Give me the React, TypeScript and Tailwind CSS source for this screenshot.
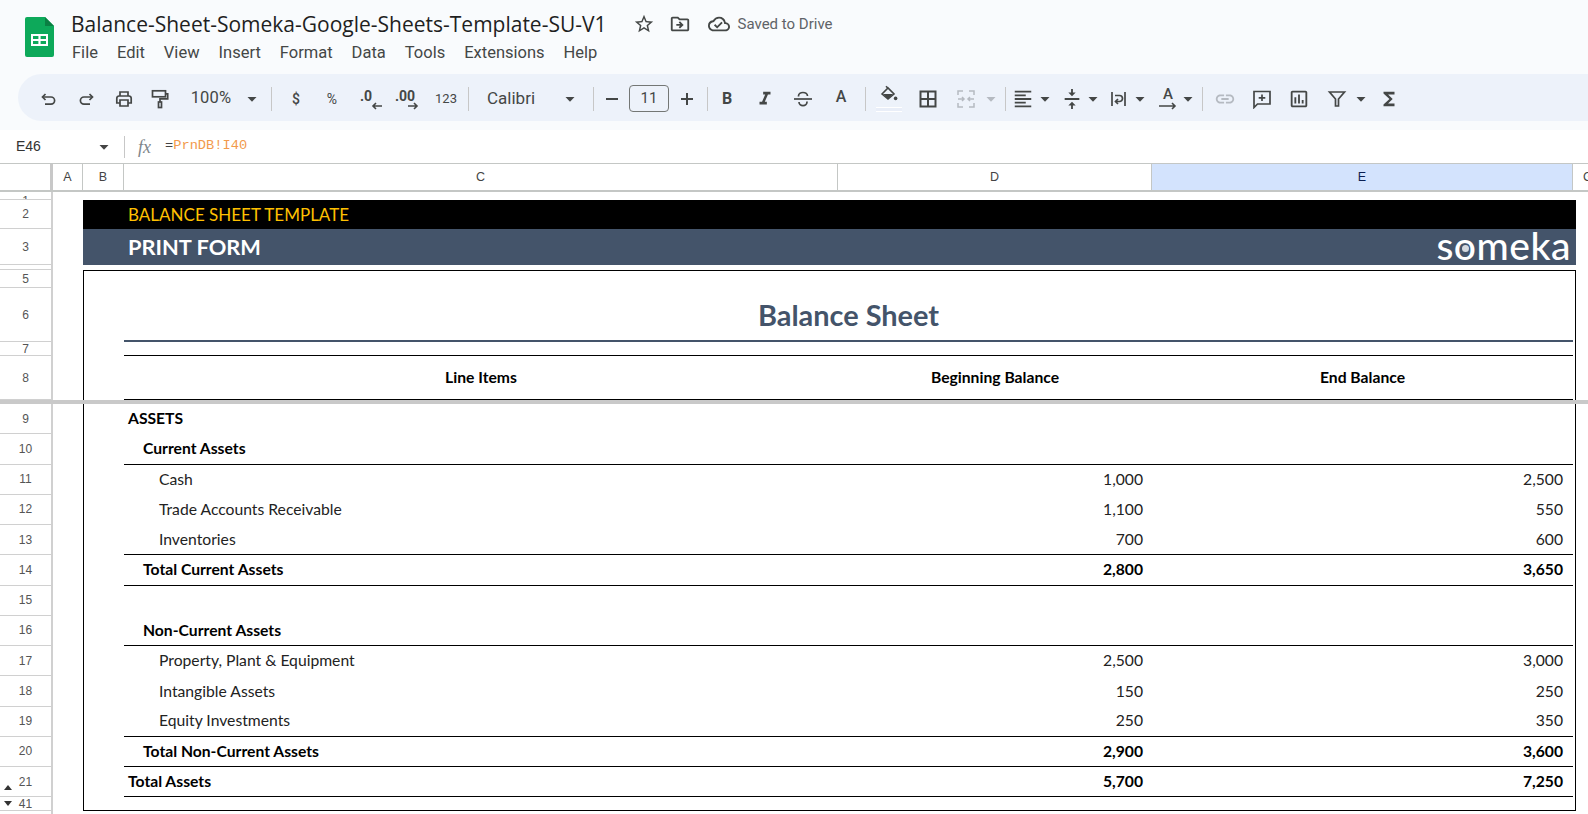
import React from "react";
import { MdFormatItalic, MdFormatAlignLeft, MdVerticalAlignCenter, MdLink, MdOutlineAssessment, MdFunctions, MdStarBorder, MdOutlineCloudDone, MdOutlineDriveFileMove } from "react-icons/md";

const C = "#444746";

function Caret({ className = "", color = C }: { className?: string; color?: string }) {
  return (
    <svg width="12" height="12" viewBox="0 0 12 12" className={`shrink-0 ${className}`}>
      <path d="M1.5 4h9L6 8.8z" fill={color} />
    </svg>
  );
}
function Sep({ className = "" }: { className?: string }) {
  return <div className={`w-px h-[24px] bg-[#c7c7c7] shrink-0 ${className}`} />;
}
function Ic({ className = "", children }: { className?: string; children: React.ReactNode }) {
  return (
    <svg width="20" height="20" viewBox="0 0 20 20" fill="none" stroke={C} strokeWidth="1.7" className={`shrink-0 ${className}`}>
      {children}
    </svg>
  );
}
function Txt({ className = "", children }: { className?: string; children: React.ReactNode }) {
  return <div className={`shrink-0 text-center text-[#444746] leading-none ${className}`}>{children}</div>;
}

function Toolbar() {
  return (
    <div className="flex items-center h-[47px] pt-[2px] ml-[18px] bg-[#edf2fa] rounded-l-[24px] font-['Roboto',sans-serif]">
      <Ic className="ml-[21px]"><path d="M6.5 5 3.5 8l3 3" /><path d="M4 8h8a3.6 3.6 0 0 1 0 7.2H6" /></Ic>
      <Ic className="ml-[17px]"><path d="M13.5 5l3 3-3 3" /><path d="M16 8H8a3.6 3.6 0 0 0 0 7.2h6" /></Ic>
      <Ic className="ml-[18px]"><path d="M6 7V3h8v4" /><path d="M6 14H2.8V9.2A2.2 2.2 0 0 1 5 7h10a2.2 2.2 0 0 1 2.2 2.2V14H14" /><path d="M6 11h8v6H6z" /></Ic>
      <Ic className="ml-[16px]"><rect x="2.5" y="1.8" width="13" height="6" /><path d="M15.5 4.8h2.2v5H10V13" /><rect x="8.5" y="13" width="3" height="5.5" /></Ic>
      <Txt className="ml-[19px] w-[44px] text-[16.5px] tracking-[0.2px]">100%</Txt>
      <Caret className="ml-[13px]" />
      <Sep className="ml-[13px]" />
      <Txt className="ml-[15px] w-[18px] text-[14px] font-medium">$</Txt>
      <Txt className="ml-[18px] w-[18px] text-[14px]">%</Txt>
      <div className="ml-[18px] w-[24px] h-[24px] relative shrink-0 text-[#444746]">
        <div className="text-[14px] font-bold leading-none pl-[1px] pt-[2px]">.0</div>
        <svg width="12" height="8" viewBox="0 0 12 8" className="absolute right-0 bottom-[1px]"><path d="M11 4H2M5 1 2 4l3 3" fill="none" stroke={C} strokeWidth="1.6" /></svg>
      </div>
      <div className="ml-[12px] w-[26px] h-[24px] relative shrink-0 text-[#444746]">
        <div className="text-[14px] font-bold leading-none pt-[2px]">.00</div>
        <svg width="12" height="8" viewBox="0 0 12 8" className="absolute right-[2px] bottom-[1px]"><path d="M1 4h9M7 1l3 3-3 3" fill="none" stroke={C} strokeWidth="1.6" /></svg>
      </div>
      <Txt className="ml-[14px] w-[22px] text-[13px]">123</Txt>
      <Sep className="ml-[11px]" />
      <div className="ml-[18px] w-[74px] text-[17px] text-[#444746] leading-none shrink-0">Calibri</div>
      <Caret className="ml-[3px]" />
      <Sep className="ml-[17px]" />
      <svg width="14" height="14" viewBox="0 0 14 14" className="ml-[11px] shrink-0"><path d="M1 7h12" stroke={C} strokeWidth="2" /></svg>
      <div className="ml-[10px] w-[40px] h-[27px] rounded-[4px] border border-[#747775] flex items-center justify-center text-[15px] text-[#444746] shrink-0">11</div>
      <svg width="14" height="14" viewBox="0 0 14 14" className="ml-[11px] shrink-0"><path d="M1 7h12M7 1v12" stroke={C} strokeWidth="2" /></svg>
      <Sep className="ml-[13px]" />
      <Txt className="ml-[9px] w-[20px] text-[16px] font-bold">B</Txt>
      <MdFormatItalic size={22} color={C} className="ml-[17px] shrink-0" />
      <Ic className="ml-[17px]"><path d="M1 10h18" /><path d="M5.5 7.5V7a4.5 3.5 0 0 1 9 0" /><path d="M6 13a4 3.6 0 0 0 8 0v-.5" /></Ic>
      <Txt className="ml-[18px] w-[20px] text-[16px] font-medium pb-[3px]">A</Txt>
      <Sep className="ml-[14px]" />
      <div className="ml-[10px] w-[26px] h-[28px] shrink-0 flex flex-col items-center">
        <svg width="20" height="19" viewBox="0 0 20 19" fill="none">
          <path d="M7 1.2 9 3.2M3 9l6-6 6 6-6 5z" stroke={C} strokeWidth="1.6" />
          <path d="M4 9h10l-5 5z" fill={C} />
          <circle cx="16.6" cy="13.4" r="1.8" fill={C} />
        </svg>
        <div className="w-[26px] h-[5px] mt-[3px] border-y border-[#fff] bg-[#e9eef8]" />
      </div>
      <svg width="20" height="20" viewBox="0 0 20 20" fill="none" stroke={C} strokeWidth="2" className="ml-[16px] shrink-0"><rect x="2.5" y="2.5" width="15" height="15" /><path d="M10 2.5v15M2.5 10h15" /></svg>
      <svg width="20" height="20" viewBox="0 0 20 20" fill="none" stroke="#b5bac1" strokeWidth="1.5" className="ml-[18px] shrink-0"><path d="M7 2H2v4M7 18H2v-4M13 2h5v4M13 18h5v-4M2 10h6M6 8l2 2-2 2M18 10h-6M14 8l-2 2 2 2" /></svg>
      <Caret className="ml-[9px]" color="#b5bac1" />
      <Sep className="ml-[8px]" />
      <MdFormatAlignLeft size={22} color={C} className="ml-[6px] shrink-0" />
      <Caret className="ml-[5px]" />
      <MdVerticalAlignCenter size={22} color={C} className="ml-[10px] shrink-0" />
      <Caret className="ml-[4px]" />
      <Ic className="ml-[10px]"><path d="M3 3v14M16 3v14" /><path d="M6 6.5h4.5a3 3 0 0 1 0 6H7" /><path d="M9 10 6.5 12.5 9 15" /></Ic>
      <Caret className="ml-[5px]" />
      <div className="ml-[12px] w-[20px] h-[24px] relative shrink-0">
        <div className="text-center text-[15px] leading-none text-[#444746] font-medium">A</div>
        <svg width="20" height="9" viewBox="0 0 20 9" className="absolute left-0 bottom-0"><path d="M1 4h16M14 1l3 3-3 3" fill="none" stroke={C} strokeWidth="1.6" /></svg>
      </div>
      <Caret className="ml-[4px]" />
      <Sep className="ml-[8px]" />
      <MdLink size={22} color="#b5bac1" className="ml-[11px] shrink-0" />
      <Ic className="ml-[16px]"><path d="M2 2.5h16v12.5H5.5L2 18.5z" /><path d="M10 5.5v6.5M6.7 8.8h6.6" /></Ic>
      <MdOutlineAssessment size={22} color={C} className="ml-[16px] shrink-0" />
      <Ic className="ml-[17px]"><path d="M2.5 3h15L11.5 10v7h-3v-7z" /></Ic>
      <Caret className="ml-[8px]" />
      <MdFunctions size={22} color={C} className="ml-[11px] shrink-0" />
    </div>
  );
}

function Header() {
  const menu = ["File", "Edit", "View", "Insert", "Format", "Data", "Tools", "Extensions", "Help"];
  return (
    <div className="h-[130px] bg-[#f9fbfd] font-['Roboto',sans-serif]">
      <div className="flex h-[74px]">
        <svg width="29" height="40" viewBox="0 0 29 40" className="ml-[25px] mt-[17px] shrink-0">
          <path d="M2 0h18l9 9v29a2 2 0 0 1-2 2H2a2 2 0 0 1-2-2V2a2 2 0 0 1 2-2z" fill="#0da95a" />
          <path d="M20 0l9 9h-9z" fill="#0a8043" />
          <path d="M6 17h17v12H6zM8 19v3h5.4v-3zM15.6 19v3H21v-3zM8 24v3h5.4v-3zM15.6 24v3H21v-3z" fill="#fff" fillRule="evenodd" />
        </svg>
        <div className="ml-[17px] pt-[12px]">
          <div className="flex items-center h-[24px]">
            <div className="font-['Open_Sans',sans-serif] text-[21px] leading-none text-[#1f1f1f] whitespace-nowrap">Balance-Sheet-Someka-Google-Sheets-Template-SU-V1</div>
            <MdStarBorder size={22} color={C} className="ml-[26px] shrink-0" />
            <MdOutlineDriveFileMove size={22} color={C} className="ml-[14px] shrink-0" />
            <MdOutlineCloudDone size={22} color={C} className="ml-[17px] shrink-0" />
            <div className="ml-[8px] text-[15px] text-[#5f6368] whitespace-nowrap">Saved to Drive</div>
          </div>
          <div className="flex items-center h-[24px] mt-[5px] ml-[1px] gap-[19px] text-[16.5px] text-[#444746]">
            {menu.map((m) => (
              <div key={m}>{m}</div>
            ))}
          </div>
        </div>
      </div>
      <Toolbar />
    </div>
  );
}

function FormulaBar() {
  return (
    <div className="flex items-center h-[33px] bg-white font-['Liberation_Sans',sans-serif]">
      <div className="ml-[16px] w-[80px] text-[14px] text-[#333]">E46</div>
      <Caret className="ml-[2px]" color="#444" />
      <div className="ml-[14px] w-px h-[22px] bg-[#c7c7c7]" />
      <div className="ml-[13px] w-[18px] font-['Liberation_Serif',serif] italic text-[18px] text-[#80868b] leading-none">fx</div>
      <div className="ml-[9px] font-['Liberation_Mono',monospace] text-[13.7px] text-[#444]">=<span className="text-[#f29a4b]">PrnDB!I40</span></div>
    </div>
  );
}

const GRID = "grid grid-cols-[53px_30px_41px_714px_314px_421px_3px_12px]";

function ColHeaders() {
  const cell = "flex items-center justify-center border-r border-[#c4c7c5]";
  return (
    <div className={`${GRID} h-[29px] border-t border-b-2 border-[#c4c7c5] text-[12.5px] text-[#444] font-['Liberation_Sans',sans-serif]`}>
      <div className="border-r-[3px] border-[#c8c8c8]" />
      <div className={cell}>A</div>
      <div className={cell}>B</div>
      <div className={cell}>C</div>
      <div className={cell}>D</div>
      <div className={`${cell} bg-[#d3e3fd] text-[#0b1f52]`}>E</div>
      <div className="col-span-2 overflow-hidden pl-[10px] flex items-center">G</div>
    </div>
  );
}

function RowNum({ n, mark }: { n?: string; mark?: "up" | "down" }) {
  return (
    <div className="relative h-full border-r-[2px] border-b border-[#d0d0d0] flex items-center justify-center overflow-hidden text-[12px] font-normal text-[#555] font-['Liberation_Sans',sans-serif]">
      {mark === "up" && <div className="absolute left-[4px] bottom-[6px] w-0 h-0 border-x-[4px] border-x-transparent border-b-[5px] border-b-[#333]" />}
      {mark === "down" && <div className="absolute left-[4px] top-[4px] w-0 h-0 border-x-[4px] border-x-transparent border-t-[5px] border-t-[#333]" />}
      {n}
    </div>
  );
}

const SHEET = "font-['Lato',sans-serif]";

function DataRow({ n, label, pad, bold, d, e, line, mark }: {
  n: string; label?: string; pad?: string; bold?: boolean; d?: string; e?: string; line?: boolean; mark?: "up" | "down";
}) {
  const w = bold ? "font-bold text-black" : "text-[#222]";
  const b = line ? "border-b-[1.5px] border-black" : "";
  return (
    <div className={`${GRID} h-[30.25px] ${SHEET} text-[15.7px]`}>
      <RowNum n={n} mark={mark} />
      <div />
      <div className="border-l-[1.5px] border-black" />
      <div className={`flex items-center ${pad} ${w} ${b}`}>{label}</div>
      <div className={`flex items-center justify-end pr-[9px] ${w} ${b}`}>{d}</div>
      <div className={`flex items-center justify-end pr-[10px] ${w} ${b}`}>{e}</div>
      <div className="border-r-[1.5px] border-black" />
      <div />
    </div>
  );
}

function Sheet() {
  return (
    <div className="bg-white">
      {/* row 1 */}
      <div className={`${GRID} h-[8px]`}>
        <div className="h-full border-r-[2px] border-b border-[#d0d0d0] overflow-hidden text-center text-[12px] leading-[18px] text-[#555] font-['Liberation_Sans',sans-serif]">1</div>
      </div>
      {/* row 2 */}
      <div className={`${GRID} h-[29px] ${SHEET}`}>
        <RowNum n="2" />
        <div />
        <div className="col-span-5 bg-black text-[#ffc000] text-[17px] pl-[45px] flex items-center">BALANCE SHEET TEMPLATE</div>
      </div>
      {/* row 3 */}
      <div className={`${GRID} h-[36px] ${SHEET}`}>
        <RowNum n="3" />
        <div />
        <div className="col-span-5 h-[36px] overflow-hidden bg-[#44546a] text-white text-[21.8px] font-bold pl-[45px] flex items-center justify-between">
          <span>PRINT FORM</span>
          <span className="relative mr-[5px] text-[39px] font-medium tracking-[0.5px] leading-[36px] h-[36px] -mt-[5px]">
            someka
            <span className="absolute left-[26px] top-[18px] w-[7px] h-[7px] rounded-full bg-[#d5d9df]" />
          </span>
        </div>
      </div>
      {/* row 4 */}
      <div className={`${GRID} h-[5px]`}><RowNum /></div>
      {/* row 5 */}
      <div className={`${GRID} h-[18px]`}>
        <RowNum n="5" />
        <div />
        <div className="col-span-5 border-x-[1.5px] border-t-[1.5px] border-black" />
      </div>
      {/* row 6 */}
      <div className={`${GRID} h-[54px] ${SHEET}`}>
        <RowNum n="6" />
        <div />
        <div className="border-l-[1.5px] border-black" />
        <div className="col-span-3 flex items-end justify-center border-b-2 border-[#44546a] text-[#44546a] text-[28.9px] font-bold leading-none pb-[10px]">Balance Sheet</div>
        <div className="border-r-[1.5px] border-black" />
      </div>
      {/* row 7 */}
      <div className={`${GRID} h-[14px]`}>
        <RowNum n="7" />
        <div />
        <div className="border-l-[1.5px] border-black" />
        <div className="col-span-3 border-b-[1.5px] border-black" />
        <div className="border-r-[1.5px] border-black" />
      </div>
      {/* row 8 */}
      <div className={`${GRID} h-[44px] ${SHEET} text-[15.7px] font-bold text-black`}>
        <RowNum n="8" />
        <div />
        <div className="border-l-[1.5px] border-black" />
        <div className="flex items-center justify-center border-b-[1.5px] border-black">Line Items</div>
        <div className="flex items-center justify-center border-b-[1.5px] border-black">Beginning Balance</div>
        <div className="flex items-center justify-center border-b-[1.5px] border-black">End Balance</div>
        <div className="border-r-[1.5px] border-black" />
      </div>
      {/* frozen pane divider */}
      <div className="h-[4px] bg-[#c9c9c9]" />
      <DataRow n="9" label="ASSETS" pad="pl-[4px]" bold />
      <DataRow n="10" label="Current Assets" pad="pl-[19px]" bold line />
      <DataRow n="11" label="Cash" pad="pl-[35px]" d="1,000" e="2,500" />
      <DataRow n="12" label="Trade Accounts Receivable" pad="pl-[35px]" d="1,100" e="550" />
      <DataRow n="13" label="Inventories" pad="pl-[35px]" d="700" e="600" line />
      <DataRow n="14" label="Total Current Assets" pad="pl-[19px]" bold d="2,800" e="3,650" line />
      <DataRow n="15" />
      <DataRow n="16" label="Non-Current Assets" pad="pl-[19px]" bold line />
      <DataRow n="17" label="Property, Plant & Equipment" pad="pl-[35px]" d="2,500" e="3,000" />
      <DataRow n="18" label="Intangible Assets" pad="pl-[35px]" d="150" e="250" />
      <DataRow n="19" label="Equity Investments" pad="pl-[35px]" d="250" e="350" line />
      <DataRow n="20" label="Total Non-Current Assets" pad="pl-[19px]" bold d="2,900" e="3,600" line />
      <DataRow n="21" label="Total Assets" pad="pl-[4px]" bold d="5,700" e="7,250" line mark="up" />
      {/* row 41 */}
      <div className={`${GRID} h-[14px]`}>
        <RowNum n="41" mark="down" />
        <div />
        <div className="col-span-5 border-x-[1.5px] border-b-[1.5px] border-black" />
      </div>
      <div className={`${GRID} h-[3px]`}><div className="border-r-[2px] border-[#d0d0d0]" /></div>
    </div>
  );
}

export default function App() {
  return (
    <div className="w-[1588px] h-[814px] overflow-hidden bg-white">
      <Header />
      <FormulaBar />
      <ColHeaders />
      <Sheet />
    </div>
  );
}
